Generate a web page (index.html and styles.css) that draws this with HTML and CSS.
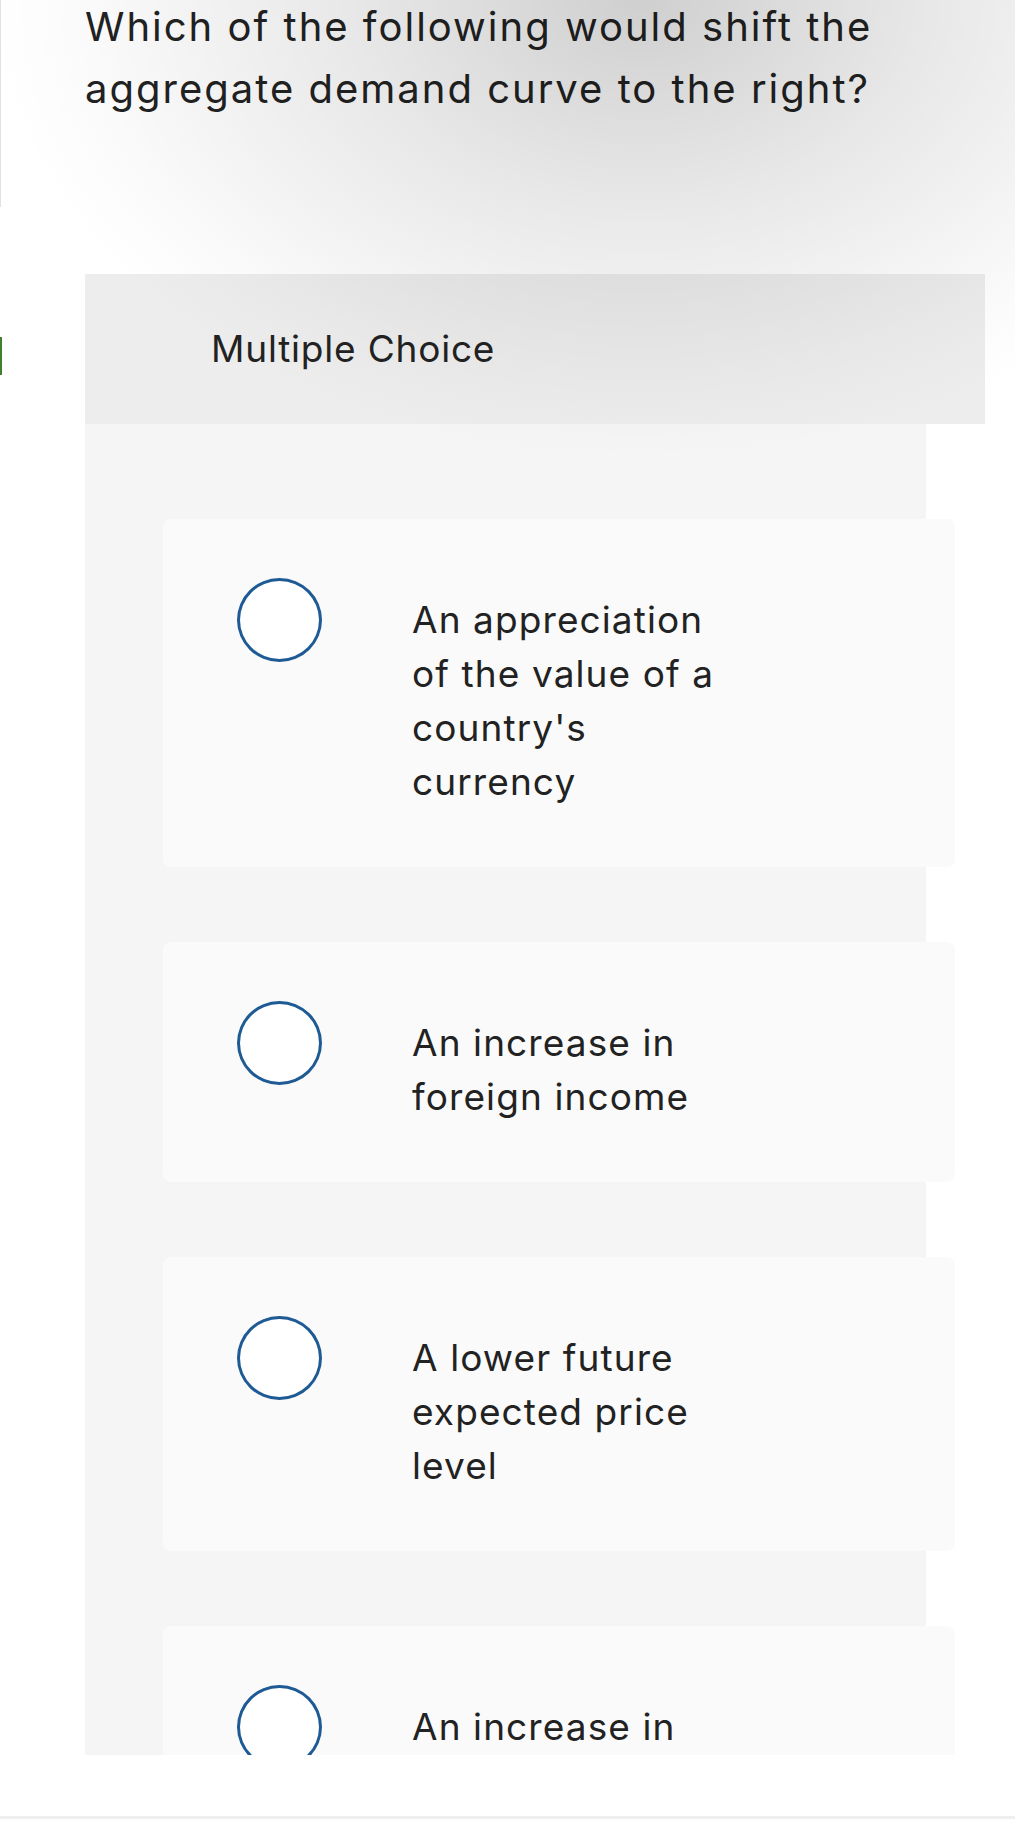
FILE: index.html
```html
<!DOCTYPE html>
<html lang="en">
<head>
<meta charset="utf-8">
<title>Multiple Choice</title>
<link rel="stylesheet" href="styles.css">
</head>
<body>
<div class="page">
  <div class="edge-line"></div>
  <div class="edge-mark"></div>

  <h1 class="question">Which of the following would shift the aggregate demand curve to the right?</h1>

  <section class="quiz">
    <div class="quiz-head">Multiple Choice</div>
    <div class="quiz-body">
      <label class="option">
        <span class="radio"></span>
        <span class="option-text">An appreciation of the value of a country's currency</span>
      </label>
      <label class="option">
        <span class="radio"></span>
        <span class="option-text">An increase in foreign income</span>
      </label>
      <label class="option">
        <span class="radio"></span>
        <span class="option-text">A lower future expected price level</span>
      </label>
      <label class="option">
        <span class="radio"></span>
        <span class="option-text">An increase in government spending</span>
      </label>
    </div>
  </section>

  <div class="footer-rule"></div>
  <div class="shade"></div>
</div>
</body>
</html>
```

FILE: styles.css
```css
html, body {
  margin: 0;
  padding: 0;
  background: #ffffff;
}

.page {
  position: relative;
  width: 1015px;
  height: 1832px;
  overflow: hidden;
  font-family: Inter, Lato, "Liberation Sans", sans-serif;
  color: #222222;
  display: flex;
  flex-direction: column;
}

.edge-line {
  position: absolute;
  left: 0;
  top: 0;
  width: 1px;
  height: 207px;
  background: #e2e2e2;
}

.edge-mark {
  position: absolute;
  left: 0;
  top: 337px;
  width: 2px;
  height: 38px;
  background: #3f7f2f;
}

.question {
  margin: -4px 0 0 85px;
  width: 900px;
  font-size: 40px;
  line-height: 62px;
  font-weight: 400;
  letter-spacing: 2px;
}

.quiz {
  margin: 154px 0 0 85px;
  width: 930px;
  height: 1481px;
  overflow: hidden;
  display: flex;
  flex-direction: column;
}

.quiz-head {
  box-sizing: border-box;
  width: 900px;
  height: 150px;
  flex: none;
  padding: 48px 0 0 126px;
  background: #ededed;
  font-size: 37px;
  line-height: 54px;
  letter-spacing: 0.8px;
}

.quiz-body {
  width: 841px;
  flex: 1;
  background: #f5f5f5;
  padding-top: 95px;
  display: flex;
  flex-direction: column;
  gap: 75px;
}

.option {
  box-sizing: border-box;
  width: 792px;
  margin-left: 78px;
  flex: none;
  display: flex;
  align-items: flex-start;
  padding: 59px 0 58px 74px;
  background: #fafafa;
  border-radius: 8px;
}

.radio {
  box-sizing: border-box;
  width: 85px;
  height: 84px;
  flex: none;
  border: 3px solid #1e5a94;
  border-radius: 50%;
  background: #ffffff;
  margin-right: 90px;
}

.option-text {
  width: 312px;
  margin-top: 15px;
  font-size: 37px;
  line-height: 54px;
  letter-spacing: 1.1px;
}

.footer-rule {
  margin-top: 61px;
  height: 3px;
  background: #efefef;
  flex: none;
}

.shade {
  position: absolute;
  left: 0;
  top: 0;
  width: 1015px;
  height: 700px;
  pointer-events: none;
  background: radial-gradient(ellipse 650px 460px at 640px 0px, rgba(0,0,0,0.19) 0%, rgba(0,0,0,0.09) 45%, rgba(0,0,0,0.02) 85%, rgba(0,0,0,0) 100%);
}
```
